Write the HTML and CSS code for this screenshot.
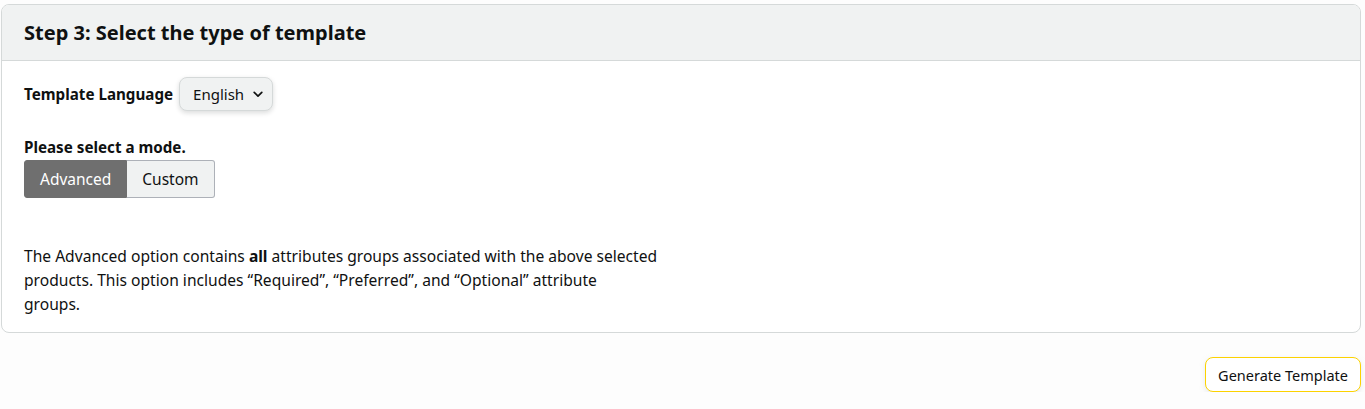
FILE: index.html
```html
<!DOCTYPE html>
<html lang="en">
<head>
<meta charset="utf-8">
<title>Step 3</title>
<link rel="stylesheet" href="styles.css">
</head>
<body>
<div class="page">
  <section class="card">
    <header class="card-head">
      <h2 class="card-title">Step 3: Select the type of template</h2>
    </header>
    <div class="card-body">
      <div class="lang-row">
        <span class="label">Template Language</span>
        <button class="select">English
          <svg class="chev" width="10" height="7" viewBox="0 0 10 7"><path d="M1.2 1.3 L5 5.1 L8.8 1.3" fill="none" stroke="#0f1111" stroke-width="1.7" stroke-linecap="round" stroke-linejoin="round"/></svg>
        </button>
      </div>
      <div class="mode">
        <div class="label">Please select a mode.</div>
        <div class="seg">
          <button class="seg-btn active">Advanced</button>
          <button class="seg-btn">Custom</button>
        </div>
      </div>
      <p class="desc">The Advanced option contains <b>all</b> attributes groups associated with the above selected products. This option includes “Required”, “Preferred”, and “Optional” attribute<br>groups.</p>
    </div>
  </section>
  <div class="actions">
    <button class="gen">Generate Template</button>
  </div>
</div>
</body>
</html>
```
FILE: styles.css
```css
* { box-sizing: border-box; }
html, body { margin: 0; padding: 0; background: #fdfdfd; }
body {
  font-family: "Noto Sans", "Liberation Sans", Arial, sans-serif;
  color: #0f1111;
  font-size: 15.5px;
}
.page { padding: 4px 4px 0 1px; }
.card {
  border: 1px solid #d5d9d9;
  border-radius: 8px;
  background: #fff;
  overflow: hidden;
}
.card-head {
  background: #f0f2f2;
  border-bottom: 1px solid #d5d9d9;
  height: 56px;
  display: flex;
  align-items: center;
  padding: 0 22px;
}
.card-title {
  margin: 0;
  font-size: 20px;
  font-weight: 700;
}
.card-body { padding: 16px 22px 16px; }
.lang-row { display: flex; align-items: center; gap: 6px; }
.label { font-weight: 700; font-size: 15.2px; }
.select {
  font: inherit;
  font-size: 15px;
  color: inherit;
  display: inline-flex;
  align-items: center;
  gap: 9px;
  height: 34px;
  padding: 0 9px 0 13px;
  background: #f0f2f2;
  border: 1px solid #d5d9d9;
  border-radius: 8px;
  box-shadow: 0 2px 5px rgba(15,17,17,.15);
}
.mode { margin-top: 26px; }
.seg { display: flex; margin-top: 3px; }
.seg-btn {
  font: inherit;
  height: 38px;
  padding: 0 15px;
  border: 1px solid #adb1b8;
  background: #f0f2f2;
  color: #0f1111;
}
.seg-btn:first-child { border-radius: 3px 0 0 3px; }
.seg-btn:last-child { border-radius: 0 3px 3px 0; border-left: none; }
.seg-btn.active { background: #6f6f6f; color: #fff; border-color: #6f6f6f; }
.desc {
  margin: 46px 0 0;
  max-width: 640px;
  font-size: 15.6px;
  line-height: 24px;
}
.actions { display: flex; justify-content: flex-end; padding: 24px 0 0; }
.gen {
  font: inherit;
  font-size: 14.5px;
  color: #0f1111;
  height: 35px;
  padding: 0 12px;
  background: #fff;
  border: 1px solid #fcd200;
  border-radius: 8px;
  box-shadow: 0 2px 5px rgba(213,217,217,.5);
}
```
